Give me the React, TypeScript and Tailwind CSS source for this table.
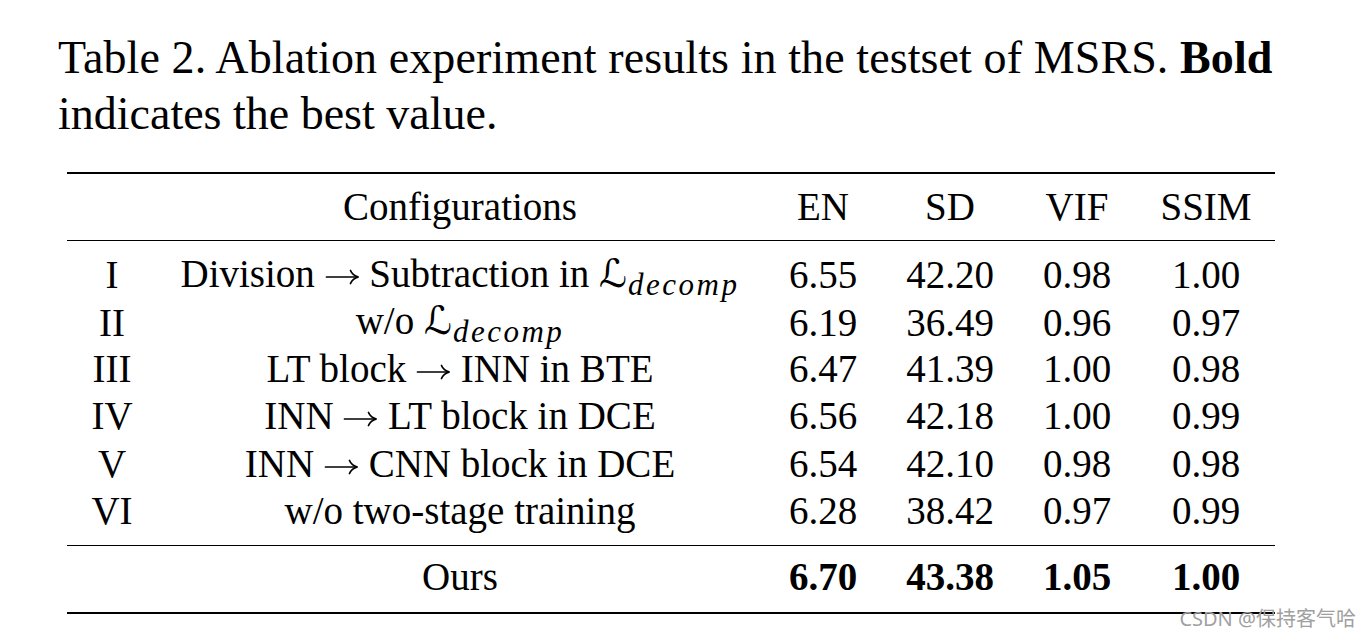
import React from "react";

const serif = { fontFamily: '"Liberation Serif", "Times New Roman", serif' };

function Arrow() {
  return (
    <svg
      width="35"
      height="16"
      viewBox="0 0 35 16"
      className="inline-block align-baseline relative top-[-2px]"
      fill="none"
      stroke="black"
      strokeWidth="1.7"
      strokeLinecap="round"
    >
      <path d="M1.5 8 H32.5" />
      <path d="M25.5 1.5 Q27.5 6.5 33.5 8 Q27.5 9.5 25.5 14.5" />
    </svg>
  );
}

function Ld() {
  return (
    <span className="whitespace-nowrap">
      <span className="italic" style={{ fontFamily: '"DejaVu Serif", "DejaVu Sans", serif' }}>ℒ</span>
      <span className="text-[31px] italic relative top-[8px] tracking-[2.5px] ml-[1px]" style={serif}>decomp</span>
    </span>
  );
}

const rows: { id: string; cfg: React.ReactNode; v: string[] }[] = [
  { id: "I", cfg: <>Division <Arrow /> Subtraction in <Ld /></>, v: ["6.55", "42.20", "0.98", "1.00"] },
  { id: "II", cfg: <>w/o <Ld /></>, v: ["6.19", "36.49", "0.96", "0.97"] },
  { id: "III", cfg: <>LT block <Arrow /> INN in BTE</>, v: ["6.47", "41.39", "1.00", "0.98"] },
  { id: "IV", cfg: <>INN <Arrow /> LT block in DCE</>, v: ["6.56", "42.18", "1.00", "0.99"] },
  { id: "V", cfg: <>INN <Arrow /> CNN block in DCE</>, v: ["6.54", "42.10", "0.98", "0.98"] },
  { id: "VI", cfg: <>w/o two-stage training</>, v: ["6.28", "38.42", "0.97", "0.99"] },
];

const cols = "grid grid-cols-[90px_606px_120px_134px_120px_138px]";

export default function App() {
  return (
    <div className="relative w-[1370px] h-[638px] bg-white text-black overflow-hidden" style={serif}>
      <div className="pl-[58px] pt-[30px] text-[46px] leading-[56px]">
        <div className="whitespace-nowrap tracking-[0.1px]">
          Table 2. Ablation experiment results in the testset of MSRS. <b>Bold</b>
        </div>
        <div className="whitespace-nowrap">indicates the best value.</div>
      </div>
      <div className="ml-[67px] mt-[30px] w-[1208px] text-[39px]">
        <div className="border-t-[2.5px] border-black" />
        <div className={`${cols} h-[66px] items-center text-center`}>
          <div />
          <div>Configurations</div>
          <div>EN</div>
          <div>SD</div>
          <div>VIF</div>
          <div>SSIM</div>
        </div>
        <div className="border-t-[1.5px] border-black" />
        <div className="pt-[8.5px] pb-[10px]">
          {rows.map((r) => (
            <div key={r.id} className={`${cols} h-[47.5px] items-center text-center leading-[47.5px]`}>
              <div>{r.id}</div>
              <div className="whitespace-nowrap">{r.cfg}</div>
              {r.v.map((x, i) => (
                <div key={i}>{x}</div>
              ))}
            </div>
          ))}
        </div>
        <div className="border-t-[1.5px] border-black" />
        <div className={`${cols} h-[66.5px] pb-[4px] items-center text-center`}>
          <div />
          <div>Ours</div>
          <div className="font-bold">6.70</div>
          <div className="font-bold">43.38</div>
          <div className="font-bold">1.05</div>
          <div className="font-bold">1.00</div>
        </div>
        <div className="border-t-[2.5px] border-black" />
      </div>
      <div
        className="absolute right-[14px] bottom-[4px] text-[20px] text-[#a0a0a0] whitespace-nowrap"
        style={{ fontFamily: '"Noto Sans", "Noto Sans CJK SC", sans-serif' }}
      >
        CSDN @保持客气哈
      </div>
    </div>
  );
}
